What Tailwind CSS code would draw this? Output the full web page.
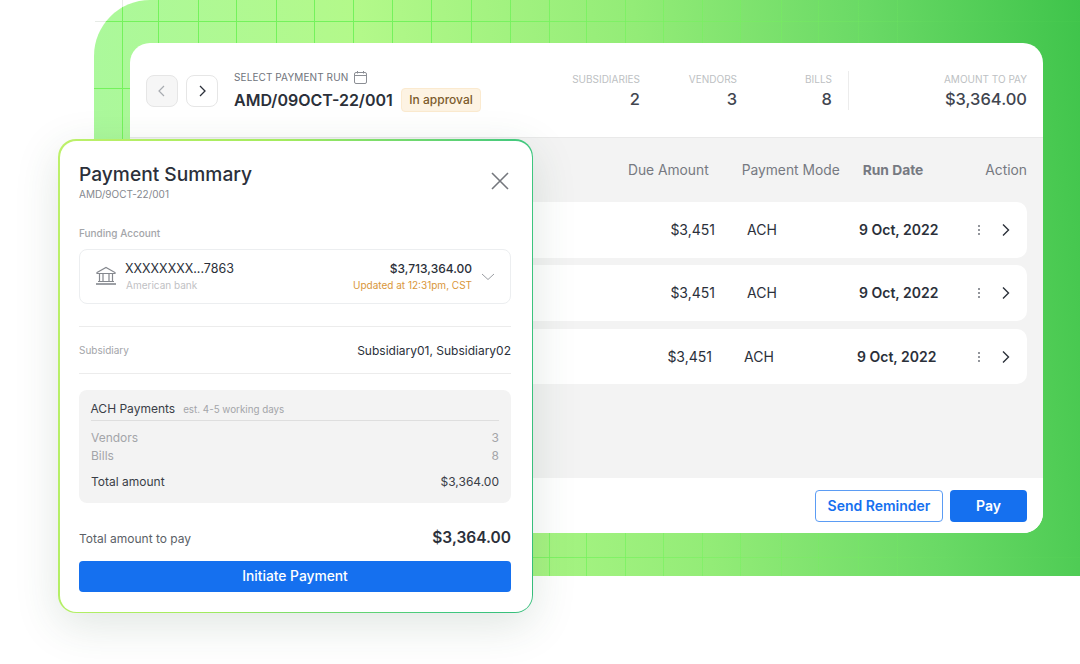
<!DOCTYPE html>
<html>
<head>
    <title>Payment Summary</title>
    <script src="https://cdn.jsdelivr.net/npm/@tailwindcss/browser@4"></script>
</head>
<body class="bg-white font-['Inter','Liberation_Sans',sans-serif] text-[#2b303a] overflow-hidden">
<div class="relative w-[1080px] h-[664px] overflow-hidden">

    <!-- Grid lines that run past the rounded corner -->
    <div class="absolute left-[122px] top-0 w-px h-[12px] bg-[#e6ebe6]"></div>
    <div class="absolute left-[95px] top-[21px] w-[20px] h-px bg-[#e6ebe6]"></div>

    <!-- Green panel -->
    <div class="relative ml-[94px] h-[576px] rounded-tl-[56px] overflow-hidden pl-[36px] pt-[43px] bg-[linear-gradient(82deg,#a9f8a0_0%,#b3f98a_32%,#93ec77_58%,#69d965_80%,#3fc44b_100%)]">
        <svg class="absolute left-0 top-0" width="986" height="576" fill="none">
            <defs>
                <linearGradient id="gridFade" gradientUnits="userSpaceOnUse" x1="350" y1="0" x2="860" y2="0">
                    <stop offset="0" stop-color="#74f25c" stop-opacity="1"/>
                    <stop offset="1" stop-color="#74f25c" stop-opacity="0.05"/>
                </linearGradient>
            </defs>
            <path stroke="url(#gridFade)" d="M0 21.5H986M0 88.5H40M0 557.5H986M28.5 0V140M64.5 0V45M104.5 0V45M142.5 0V45M182.5 0V45M220.5 0V45M259.5 0V45M298.5 0V45M337.5 0V45M377.5 0V45M416.5 0V45M455.5 0V45M492.5 0V45M531.5 0V45M569.5 0V45M608.5 0V45M646.5 0V45M687.5 0V45M724.5 0V45M764.5 0V45M803.5 0V45M455.5 533V576M492.5 533V576M531.5 533V576M569.5 533V576M608.5 533V576M646.5 533V576M687.5 533V576M724.5 533V576M764.5 533V576M803.5 533V576"/>
        </svg>

        <!-- Payment run card -->
        <div class="relative w-[913px] h-[490px] rounded-[20px] bg-white overflow-hidden flex flex-col">
            <div class="h-[95px] shrink-0 border-b border-[#e9e9e9] flex items-start pl-[16px] pr-[16px] pt-[28px]">
                <div class="flex gap-[8px] mt-[4px]">
                    <div class="w-[32px] h-[32px] rounded-[8px] bg-[#f6f6f6] border border-[#e6e6e6] flex items-center justify-center">
                        <svg width="16" height="16" viewBox="0 0 16 16" fill="none" stroke="#a8abb0" stroke-width="1.2"><path d="M10 3 5 8l5 5"/></svg>
                    </div>
                    <div class="w-[32px] h-[32px] rounded-[8px] bg-white border border-[#e6e6e6] flex items-center justify-center">
                        <svg width="16" height="16" viewBox="0 0 16 16" fill="none" stroke="#2b303a" stroke-width="1.3"><path d="m6 3 5 5-5 5"/></svg>
                    </div>
                </div>
                <div class="ml-[16px]">
                    <div class="flex items-center gap-[6px] h-[14px] -mt-[1px] text-[10px] text-[#6f737b] tracking-[0.1px]">
                        SELECT PAYMENT RUN
                        <svg width="13" height="13" viewBox="0 0 13 13" fill="none" stroke="#8b8e94"><rect x="0.5" y="1.5" width="12" height="11" rx="1.5"/><path d="M0.5 4.5h12M3.5 0v2.500M9.500 0v2.500"/></svg>
                    </div>
                    <div class="flex items-center gap-[8px] mt-[3px]">
                        <span class="text-[16px] leading-[24px] font-semibold translate-y-[1px]">AMD/09OCT-22/001</span>
                        <span class="h-[24px] px-[7.500px] rounded-[4px] bg-[#fdf3e3] border border-[#fbeacf] text-[12px] leading-[22px] font-medium text-[#7b5a2c] translate-y-[1px]">In approval</span>
                    </div>
                </div>
                <div class="ml-auto flex">
                    <div class="text-right w-[70px] mr-[47px]">
                        <div class="text-[10px] leading-[14px] mt-[1px] text-[#bdbfc3]">SUBSIDIARIES</div>
                        <div class="text-[16.5px] leading-[24px] font-medium text-[#41454f] mt-[1px]">2</div>
                    </div>
                    <div class="text-right w-[50px] mr-[67px]">
                        <div class="text-[10px] leading-[14px] mt-[1px] text-[#bdbfc3]">VENDORS</div>
                        <div class="text-[16.5px] leading-[24px] font-medium text-[#41454f] mt-[1px]">3</div>
                    </div>
                    <div class="text-right w-[28px] pr-0">
                        <div class="text-[10px] leading-[14px] mt-[1px] text-[#bdbfc3]">BILLS</div>
                        <div class="text-[16.5px] leading-[24px] font-medium text-[#41454f] mt-[1px]">8</div>
                    </div>
                    <div class="w-px h-[39px] bg-[#ececec] ml-[16px] mr-[16px]"></div>
                    <div class="text-right w-[162px]">
                        <div class="text-[10px] leading-[14px] mt-[1px] text-[#bdbfc3]">AMOUNT TO PAY</div>
                        <div class="text-[16.5px] leading-[24px] font-medium text-[#41454f] mt-[1px]">$3,364.00</div>
                    </div>
                </div>
            </div>

            <!-- Table -->
            <div class="flex-1 bg-[#f3f3f3] px-[16px]">
                <div class="h-[64px] flex items-center justify-end text-[13.8px] text-[#767981]">
                    <span>Due Amount</span>
                    <span class="ml-[33px]">Payment Mode</span>
                    <span class="ml-[23px] font-bold">Run Date</span>
                    <span class="ml-[62px]">Action</span>
                </div>
                <div class="flex flex-col">
                    <div class="h-[56px] rounded-[10px] bg-white flex items-center justify-end text-[14px] pr-[16px] pb-[1px]">
                        <span class="mr-[32px]">$3,451</span>
                        <span class="w-[112px]">ACH</span>
                        <span class="w-[118px] font-semibold">9 Oct, 2022</span>
                        <svg width="4" height="12" viewBox="0 0 4 12" fill="#6f737b" class="mr-[20px]"><circle cx="2" cy="2" r="1"/><circle cx="2" cy="6" r="1"/><circle cx="2" cy="10" r="1"/></svg>
                        <svg width="10" height="14" viewBox="0 0 10 14" fill="none" stroke="#2b303a" stroke-width="1.4"><path d="m2 1.500 5.500 5.500L2 12.500"/></svg>
                    </div>
                    <div class="h-[56px] mt-[7px] rounded-[10px] bg-white flex items-center justify-end text-[14px] pr-[16px] pb-[1px]">
                        <span class="mr-[32px]">$3,451</span>
                        <span class="w-[112px]">ACH</span>
                        <span class="w-[118px] font-semibold">9 Oct, 2022</span>
                        <svg width="4" height="12" viewBox="0 0 4 12" fill="#6f737b" class="mr-[20px]"><circle cx="2" cy="2" r="1"/><circle cx="2" cy="6" r="1"/><circle cx="2" cy="10" r="1"/></svg>
                        <svg width="10" height="14" viewBox="0 0 10 14" fill="none" stroke="#2b303a" stroke-width="1.4"><path d="m2 1.500 5.500 5.500L2 12.500"/></svg>
                    </div>
                    <div class="h-[55px] mt-[8px] rounded-[10px] bg-white flex items-center justify-end text-[14px] pr-[16px]">
                        <span class="mr-[32px]">$3,451</span>
                        <span class="w-[113px]">ACH</span>
                        <span class="w-[120px] font-semibold">9 Oct, 2022</span>
                        <svg width="4" height="12" viewBox="0 0 4 12" fill="#6f737b" class="mr-[20px]"><circle cx="2" cy="2" r="1"/><circle cx="2" cy="6" r="1"/><circle cx="2" cy="10" r="1"/></svg>
                        <svg width="10" height="14" viewBox="0 0 10 14" fill="none" stroke="#2b303a" stroke-width="1.4"><path d="m2 1.500 5.500 5.500L2 12.500"/></svg>
                    </div>
                </div>
            </div>

            <!-- Footer -->
            <div class="h-[55px] shrink-0 bg-white flex items-start justify-end gap-[7px] pr-[16px] pt-[12px]">
                <div class="w-[128px] h-[32px] rounded-[4px] border border-[#5b9cf4] text-[14px] leading-[30px] font-semibold text-[#1570ef] text-center">Send Reminder</div>
                <div class="w-[77px] h-[32px] rounded-[4px] bg-[#1570ef] text-[14px] leading-[32px] font-semibold text-white text-center">Pay</div>
            </div>
        </div>
    </div>

    <!-- Payment summary modal -->
    <div class="absolute left-[58px] top-[139px] w-[475px] h-[474px] rounded-[18px] p-[1.5px] bg-[linear-gradient(100deg,#bdf06a_0%,#a4ec5e_40%,#3fc77f_85%,#35bd7a_100%)] shadow-[0_12px_44px_rgba(50,90,60,0.15)]">
        <div class="w-full h-full rounded-[16.5px] bg-white pl-[19.500px] pr-[20.500px] pt-[20px]">
            <div class="flex justify-between">
                <div>
                    <div class="text-[19.200px] leading-[26px] font-medium">Payment Summary</div>
                    <div class="text-[10px] leading-[14px] text-[#85888e]">AMD/9OCT-22/001</div>
                </div>
                <svg width="20" height="20" viewBox="0 0 20 20" fill="none" stroke="#74777d" stroke-width="1.6" class="mr-[1.500px] mt-[10px]"><path d="m2 2 16 16M18 2 2 18"/></svg>
            </div>

            <div class="text-[10px] leading-[14px] font-medium text-[#a3a5a9] mt-[25px]">Funding Account</div>
            <div class="h-[55px] mt-[9px] rounded-[8px] border border-[#eceef0] flex items-center pl-[15px] pr-[15px]">
                <svg width="22" height="20" viewBox="0 0 22 20" fill="none" stroke="#85888e" stroke-width="1.2">
                    <path d="M2 6.500 11 1.500l9 5v1H2zM4.500 8v7M8 8v7M14 8v7M17.500 8v7M3 15.500h16"/>
                    <path d="M1 18h20" stroke-width="1.600"/>
                </svg>
                <div class="ml-[8px]">
                    <div class="text-[12.5px] leading-[16px]">XXXXXXXX...7863</div>
                    <div class="text-[10px] leading-[14px] text-[#bfc1c4] mt-[1px] ml-[1px]">American bank</div>
                </div>
                <div class="ml-auto text-right">
                    <div class="text-[12px] leading-[16px] font-medium">$3,713,364.00</div>
                    <div class="text-[10px] leading-[14px] text-[#d9963a] mt-[1px]">Updated at 12:31pm, CST</div>
                </div>
                <svg width="14" height="8" viewBox="0 0 14 8" fill="none" stroke="#9a9da2" stroke-width="1" class="ml-[9px] mt-[1px]"><path d="m1 1 6 5.500L13 1"/></svg>
            </div>

            <div class="mt-[22px] h-[48px] pt-[2px] border-y border-[#ececec] flex items-center justify-between">
                <span class="text-[10px] text-[#a3a5a9]">Subsidiary</span>
                <span class="text-[12px]">Subsidiary01, Subsidiary02</span>
            </div>

            <div class="mt-[16px] h-[113px] rounded-[8px] bg-[#f3f3f3] px-[12px] pt-[11px]">
                <div class="flex items-baseline gap-[8px] h-[20px] border-b border-[#dedede] -ml-[0.5px]">
                    <span class="text-[12px] leading-[16px] text-[#3a3e47]">ACH Payments</span>
                    <span class="text-[9.800px] leading-[16px] text-[#a3a5a9]">est. 4-5 working days</span>
                </div>
                <div class="flex justify-between text-[12px] leading-[18px] text-[#a3a5a9] mt-[8px]"><span>Vendors</span><span>3</span></div>
                <div class="flex justify-between text-[12px] leading-[18px] text-[#a3a5a9]"><span>Bills</span><span>8</span></div>
                <div class="flex justify-between text-[12px] leading-[18px] text-[#3a3e47] mt-[8px]"><span>Total amount</span><span>$3,364.00</span></div>
            </div>

            <div class="flex items-center justify-between mt-[22px] h-[26px]">
                <span class="text-[12px] text-[#5b5f67] translate-y-[1px]">Total amount to pay</span>
                <span class="text-[15.500px] font-semibold">$3,364.00</span>
            </div>
            <div class="mt-[10px] h-[31px] rounded-[4px] bg-[#1570ef] text-white text-[13.800px] leading-[31px] font-medium text-center">Initiate Payment</div>
        </div>
    </div>
</div>
</body>
</html>
